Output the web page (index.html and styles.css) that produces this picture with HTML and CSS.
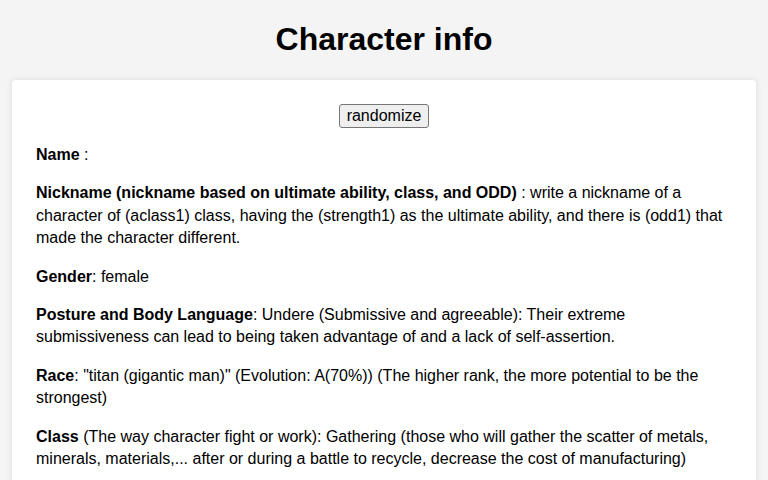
FILE: index.html
```html
<!DOCTYPE html>
<html lang="en">
<head>
    <meta charset="UTF-8">
    <meta name="viewport" content="width=device-width, initial-scale=1.0">
    <title>Character info</title>
    <link rel="stylesheet" href="styles.css">
</head>
<body>
    <h1>Character info</h1>
    <div class="card">
        <div class="actions">
            <button id="randomizeBtn">randomize</button>
        </div>
        <p><b>Name</b> :</p>
        <p><b>Nickname (nickname based on ultimate ability, class, and ODD)</b> : write a nickname of a character of (aclass1) class, having the (strength1) as the ultimate ability, and there is (odd1) that made the character different.</p>
        <p><b>Gender</b>: female</p>
        <p><b>Posture and Body Language</b>: Undere (Submissive and agreeable): Their extreme submissiveness can lead to being taken advantage of and a lack of self-assertion.</p>
        <p><b>Race</b>: "titan (gigantic man)" (Evolution: A(70%)) (The higher rank, the more potential to be the strongest)</p>
        <p><b>Class</b> (The way character fight or work): Gathering (those who will gather the scatter of metals, minerals, materials,... after or during a battle to recycle, decrease the cost of manufacturing)</p>
        <p><b>Strength</b>: (strength1)</p>
    </div>
</body>
</html>
```

FILE: styles.css
```css
body {
    font-family: "Liberation Sans", Arial, sans-serif;
    margin: 0;
    padding: 1px 12px 12px;
    background-color: #f4f4f4;
    color: #000;
}
h1 {
    text-align: center;
    font-size: 32px;
    margin: 20px 0 22px;
}
.card {
    background-color: white;
    padding: 24px;
    border-radius: 4px;
    box-shadow: 0 0 6px rgba(0, 0, 0, 0.1);
}
.actions {
    text-align: center;
}
.actions button {
    font-family: "Liberation Sans", Arial, sans-serif;
    font-size: 16px;
    padding: 2px 7px;
    background-color: #efefef;
    border: 1px solid #767676;
    border-radius: 3px;
    color: #000;
}
.card p {
    font-size: 16px;
    line-height: 1.4;
    margin: 16px 0;
}
```
